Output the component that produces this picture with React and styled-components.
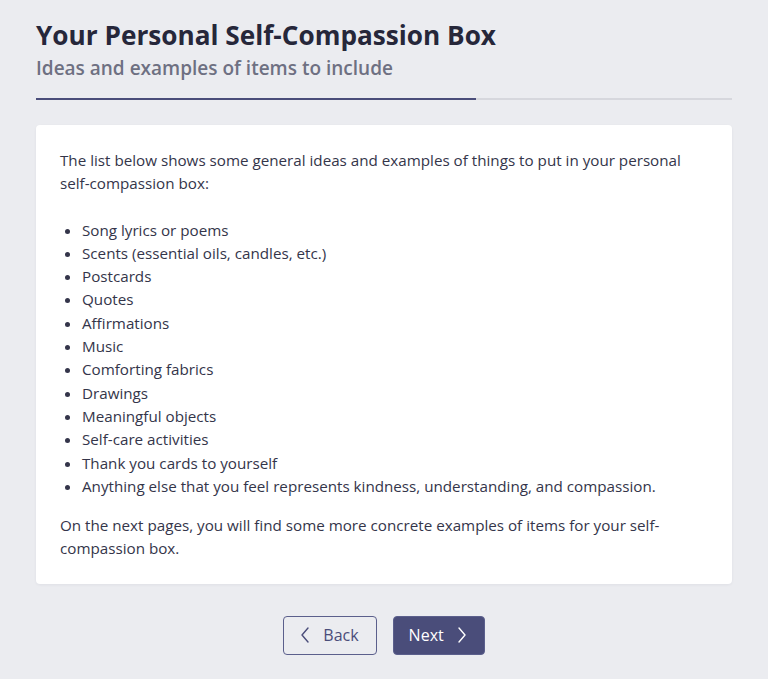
import React from "react";
import styled, { createGlobalStyle } from "styled-components";

const Global = createGlobalStyle`
  html, body { margin: 0; padding: 0; background: #ebecf0; }
  body { font-family: "Open Sans", "Noto Sans", sans-serif; color: #34354a; }
`;

const Page = styled.div`
  padding: 18px 36px 0;
  display: flex;
  flex-direction: column;
`;

const Title = styled.h1`
  margin: 0;
  font-size: 26.2px;
  line-height: 34px;
  font-weight: 700;
  color: #26273a;
`;

const Subtitle = styled.h2`
  margin: 4px 0 0;
  font-size: 19px;
  line-height: 24px;
  font-weight: 600;
  color: #6e7082;
`;

const Track = styled.div`
  margin-top: 18px;
  height: 2px;
  background: #d6d7dd;
  display: flex;
`;

const Fill = styled.div`
  height: 100%;
  background: #4a4d7a;
`;

const Card = styled.section`
  margin-top: 25px;
  background: #fff;
  border-radius: 4px;
  box-shadow: 0 1px 3px rgba(30, 32, 60, 0.06);
  padding: 24px 24px 23px;
  font-size: 15.2px;
  line-height: 23.3px;
  color: #34354a;
`;

const Para = styled.p`
  margin: 0;
`;

const List = styled.ul`
  margin: 23px 0 16px;
  padding-left: 22px;
`;

const Nav = styled.div`
  display: flex;
  justify-content: center;
  gap: 16px;
  margin-top: 32px;
`;

const Button = styled.button`
  height: 39px;
  box-sizing: border-box;
  display: inline-flex;
  align-items: center;
  gap: 12px;
  padding: ${(p) => (p.$primary ? "0 16px 0 15px" : "0 17px 0 15px")};
  border-radius: 4px;
  border: 1px solid #5b5f8c;
  background: ${(p) => (p.$primary ? "#4a4d7a" : "transparent")};
  color: ${(p) => (p.$primary ? "#ffffff" : "#4a4d7a")};
  font-family: inherit;
  font-size: 16px;
  font-weight: 500;
  cursor: pointer;
`;

const Chevron = ({ dir }) => (
  <svg width="12" height="18" viewBox="0 0 12 18" fill="none" stroke="currentColor" strokeWidth="1.4" strokeLinecap="round" strokeLinejoin="round">
    {dir === "left" ? <path d="M9 2 L3 9 L9 16" /> : <path d="M3 2 L9 9 L3 16" />}
  </svg>
);

const items = [
  "Song lyrics or poems",
  "Scents (essential oils, candles, etc.)",
  "Postcards",
  "Quotes",
  "Affirmations",
  "Music",
  "Comforting fabrics",
  "Drawings",
  "Meaningful objects",
  "Self-care activities",
  "Thank you cards to yourself",
  "Anything else that you feel represents kindness, understanding, and compassion.",
];

export default function App() {
  return (
    <>
      <Global />
      <Page>
        <Title>Your Personal Self-Compassion Box</Title>
        <Subtitle>Ideas and examples of items to include</Subtitle>
        <Track>
          <Fill style={{ width: "63.2%" }} />
        </Track>
        <Card>
          <Para>
            The list below shows some general ideas and examples of things to put in your personal
            self-compassion box:
          </Para>
          <List>
            {items.map((t) => (
              <li key={t}>{t}</li>
            ))}
          </List>
          <Para>
            On the next pages, you will find some more concrete examples of items for your self-compassion box.
          </Para>
        </Card>
        <Nav>
          <Button>
            <Chevron dir="left" />
            <span>Back</span>
          </Button>
          <Button $primary>
            <span>Next</span>
            <Chevron dir="right" />
          </Button>
        </Nav>
      </Page>
    </>
  );
}
